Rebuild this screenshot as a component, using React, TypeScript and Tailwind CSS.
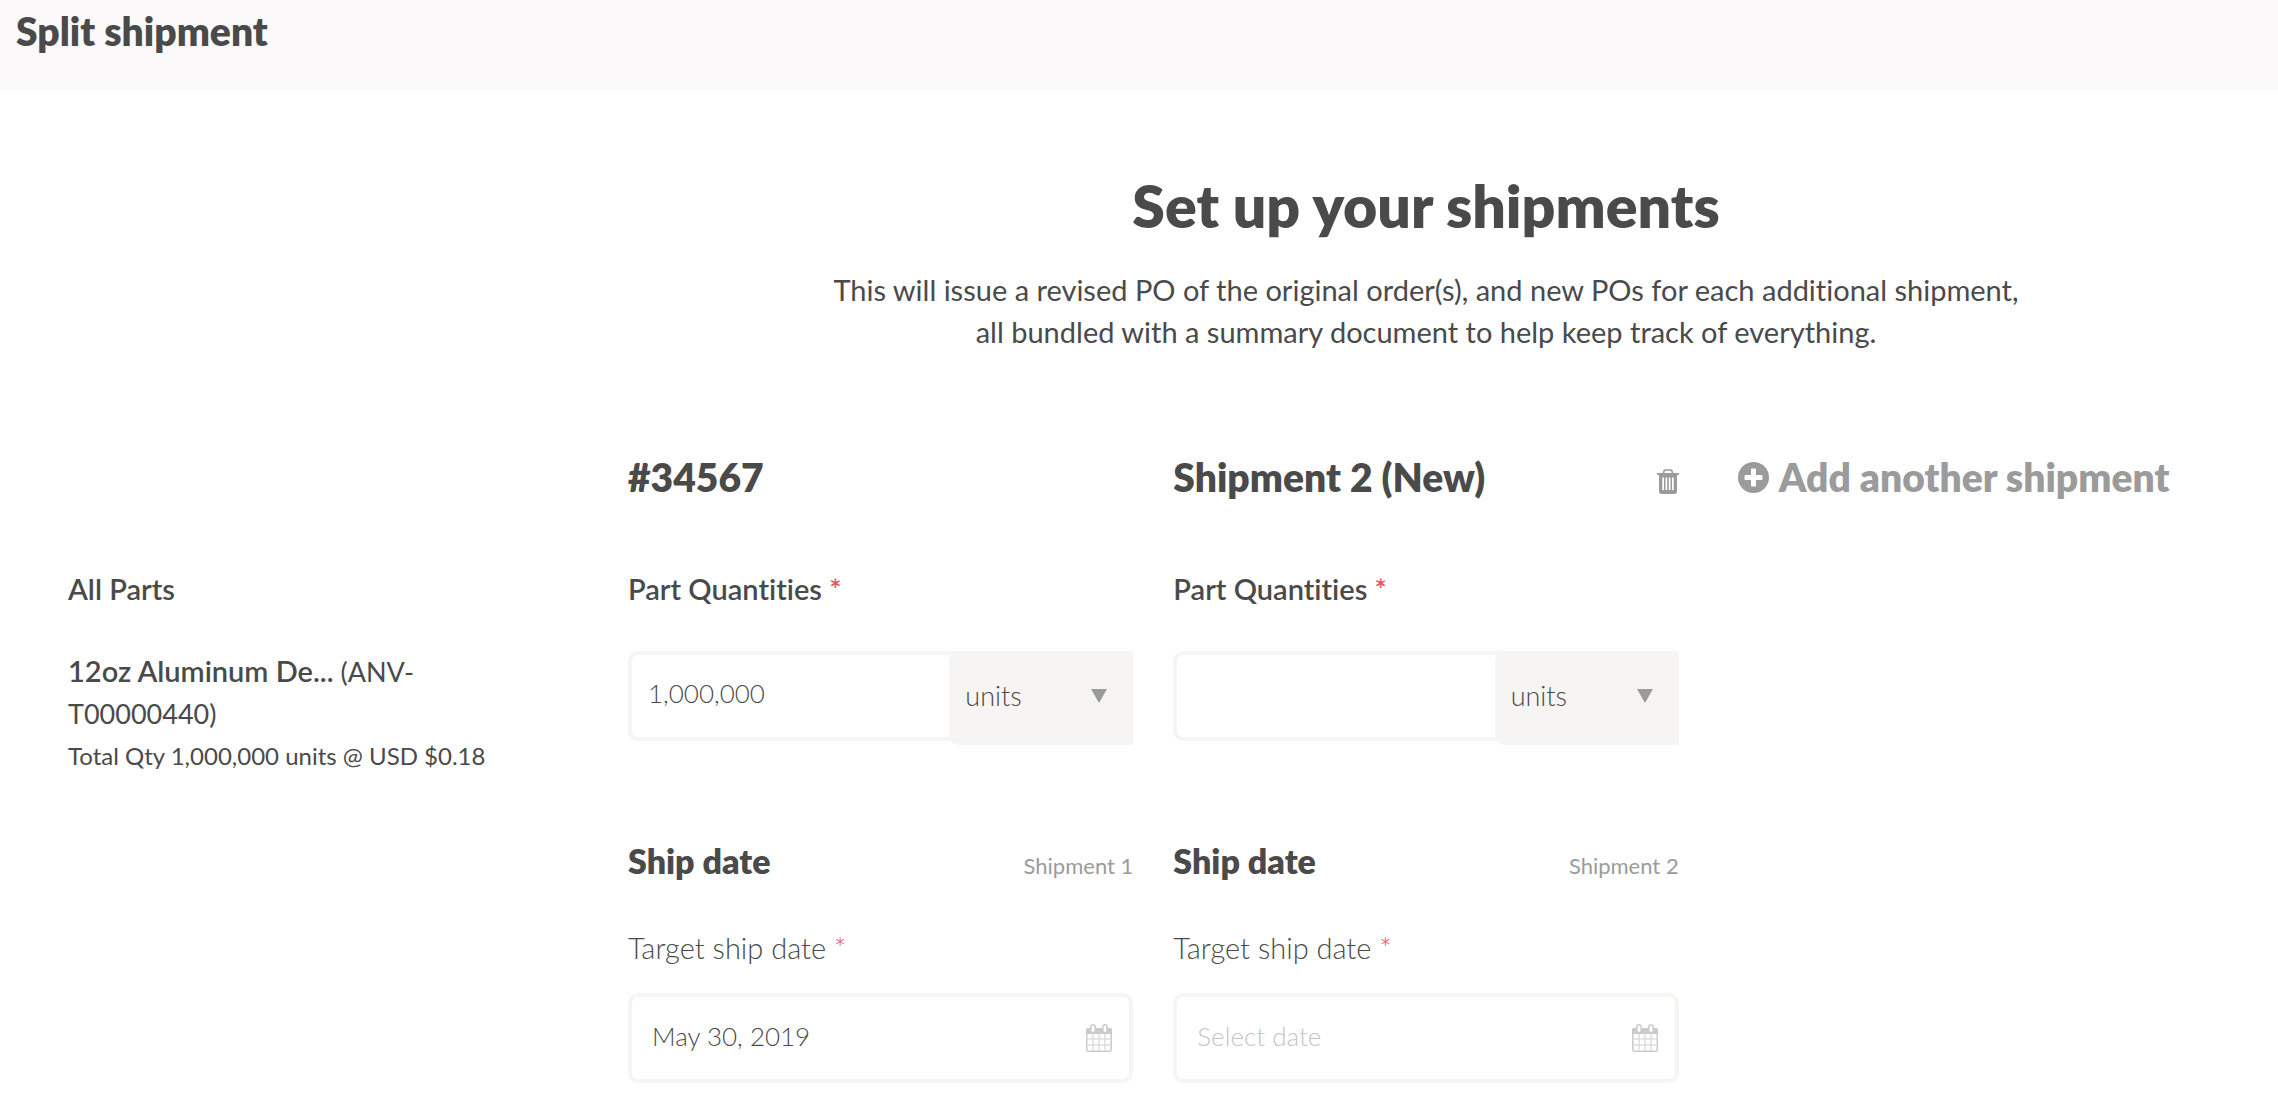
import React from 'react';

type Shipment = { id: number; title: string; quantity: string; date: string; removable: boolean };

const SHIPMENTS: Shipment[] = [
  { id: 1, title: '#34567', quantity: '1,000,000', date: 'May 30, 2019', removable: false },
  { id: 2, title: 'Shipment 2 (New)', quantity: '', date: '', removable: true },
];

function TrashIcon() {
  return (
    <svg viewBox="0 0 22 25" className="w-[22px] h-[25px]" fill="currentColor" aria-hidden="true">
      <path d="M6.6 4.5V3.4Q6.6 1 9 1h4q2.4 0 2.4 2.4v1.1" fill="none" stroke="currentColor" strokeWidth="1.5" />
      <rect x="0" y="4" width="22" height="2" rx="0.6" />
      <path
        fillRule="evenodd"
        d="M2 5h18v17.5q0 2.500-2.500 2.500h-13Q2 25 2 22.500zM5.300 8.500v12.500h1.700v-12.500zM8.500 8.500v12.500h1.700v-12.500zM11.800 8.500v12.500h1.700v-12.500zM15 8.500v12.500h1.700v-12.500z"
      />
    </svg>
  );
}

function CalendarIcon() {
  return (
    <svg viewBox="0 0 26 28" className="w-[26px] h-7" fill="none" aria-hidden="true">
      <rect x="0.75" y="5" width="24.5" height="22.25" rx="1.5" fill="#fff" stroke="#cbcbcb" strokeWidth="1.5" />
      <path d="M0 6q0-2 2-2h22q2 0 2 2v4H0z" fill="#cbcbcb" />
      <path d="M7 10v17M13 10v17M19 10v17M1 15h24M1 21h24" stroke="#dedede" strokeWidth="1.5" />
      <rect x="4.8" y="0.8" width="4.4" height="8" rx="2.2" fill="#fff" stroke="#cbcbcb" strokeWidth="1.5" />
      <rect x="16.8" y="0.8" width="4.4" height="8" rx="2.2" fill="#fff" stroke="#cbcbcb" strokeWidth="1.5" />
    </svg>
  );
}

function PlusCircleIcon() {
  return (
    <svg viewBox="0 0 31 31" className="w-[31px] h-[31px]" aria-hidden="true">
      <circle cx="15.5" cy="15.5" r="15.5" fill="currentColor" />
      <path
        d="M14 6.500h3q1 0 1 1V13h5.500q1 0 1 1v3q0 1-1 1H18v5.500q0 1-1 1h-3q-1 0-1-1V18H7.500q-1 0-1-1v-3q0-1 1-1H13V7.500q0-1 1-1z"
        fill="#fff"
      />
    </svg>
  );
}

function Required() {
  return <span className="text-[#e6515f]">*</span>;
}

function QuantityField({ shipment }: { shipment: Shipment }) {
  return (
    <div className="flex items-start">
      <input
        id={`quantity-${shipment.id}`}
        type="text"
        defaultValue={shipment.quantity}
        className="flex-1 min-w-0 h-[90px] -mr-3 pl-4 pr-4 pb-1.5 text-[26px] font-light bg-white border-4 border-r-0 border-[#f6f5f3] rounded-l-[10px] outline-none"
      />
      <div className="relative w-[184px] shrink-0">
        <select
          aria-label={`Unit for shipment ${shipment.id}`}
          defaultValue="units"
          className="block w-full h-[94px] pl-4 pr-14 pb-1 text-[27px] font-light appearance-none bg-[#f6f5f3] rounded-l-[10px] outline-none"
        >
          <option value="units">units</option>
        </select>
        <svg viewBox="0 0 16 14" className="absolute right-[26px] top-[38px] w-4 h-3.5 pointer-events-none" aria-hidden="true">
          <path d="M0 0h16L8 14z" fill="#9b9b9b" />
        </svg>
      </div>
    </div>
  );
}

function ShipDateSection({ shipment }: { shipment: Shipment }) {
  return (
    <section className="mt-[94px]">
      <div className="flex items-baseline justify-between">
        <h3 className="text-[34px] leading-[44px] font-extrabold">Ship date</h3>
        <span className="text-[22px] text-[#9b9b9b]">Shipment {shipment.id}</span>
      </div>
      <label htmlFor={`date-${shipment.id}`} className="block mt-[45px] text-[29px] leading-10 font-light">
        Target ship date <Required />
      </label>
      <div className="flex items-center h-[90px] mt-[25px] pl-5 pr-[17px] bg-white border-4 border-[#f6f5f3] rounded-[10px]">
        <input
          id={`date-${shipment.id}`}
          type="text"
          placeholder="Select date"
          defaultValue={shipment.date}
          className="flex-1 min-w-0 h-full pb-1 text-[26px] font-light bg-transparent placeholder:text-[#c4c4c4] outline-none"
        />
        <CalendarIcon />
      </div>
    </section>
  );
}

export default function App() {
  return (
    <div className="min-h-screen bg-white text-[#4a4a4a] font-['Lato',sans-serif] [font-variant-ligatures:none]">
      <header className="h-[90px] px-4 pt-[7px] bg-[#fbf9fa]">
        <h1 className="text-[39px] leading-[48px] font-extrabold">Split shipment</h1>
      </header>

      <main className="grid grid-cols-[520px_repeat(3,minmax(0,1fr))] gap-x-10 pl-[68px] pr-[54px] pt-20">
        <div className="col-start-2 col-span-3 text-center">
          <h2 className="text-[59px] leading-[72px] font-extrabold">Set up your shipments</h2>
          <p className="mt-[27px] text-[29px] leading-[42px]">
            This will issue a revised PO of the original order(s), and new POs for each additional shipment,
            <br />
            all bundled with a summary document to help keep track of everything.
          </p>
        </div>

        <div className="col-start-2 col-span-3 grid grid-cols-3 gap-x-10 mt-[100px]">
          {SHIPMENTS.map(shipment => (
            <div key={shipment.id} className="flex items-center justify-between">
              <h3 className="text-[39px] leading-[48px] font-extrabold">{shipment.title}</h3>
              {shipment.removable && (
                <button type="button" aria-label="Remove shipment" className="mt-2 text-[#9b9b9b]">
                  <TrashIcon />
                </button>
              )}
            </div>
          ))}
          <button type="button" className="flex items-center gap-2.5 pl-[19px] text-[39px] leading-[48px] font-extrabold text-[#9b9b9b] whitespace-nowrap">
            <PlusCircleIcon />
            Add another shipment
          </button>
        </div>

        <h4 className="col-start-1 mt-[68px] text-[29px] leading-10 font-semibold">All Parts</h4>
        {SHIPMENTS.map(shipment => (
          <label key={shipment.id} htmlFor={`quantity-${shipment.id}`} className="mt-[68px] text-[29px] leading-10 font-semibold">
            Part Quantities <Required />
          </label>
        ))}

        <div className="col-start-1 mt-[41px]">
          <p className="w-[400px] text-[27px] leading-[42px]">
            <span className="text-[29px] font-semibold">12oz Aluminum De...</span> (ANV-T00000440)
          </p>
          <p className="text-[24px] leading-[42px]">Total Qty 1,000,000 units @ USD $0.18</p>
        </div>
        {SHIPMENTS.map(shipment => (
          <div key={shipment.id} className="mt-[42px]">
            <QuantityField shipment={shipment} />
            <ShipDateSection shipment={shipment} />
          </div>
        ))}
      </main>
    </div>
  );
}
